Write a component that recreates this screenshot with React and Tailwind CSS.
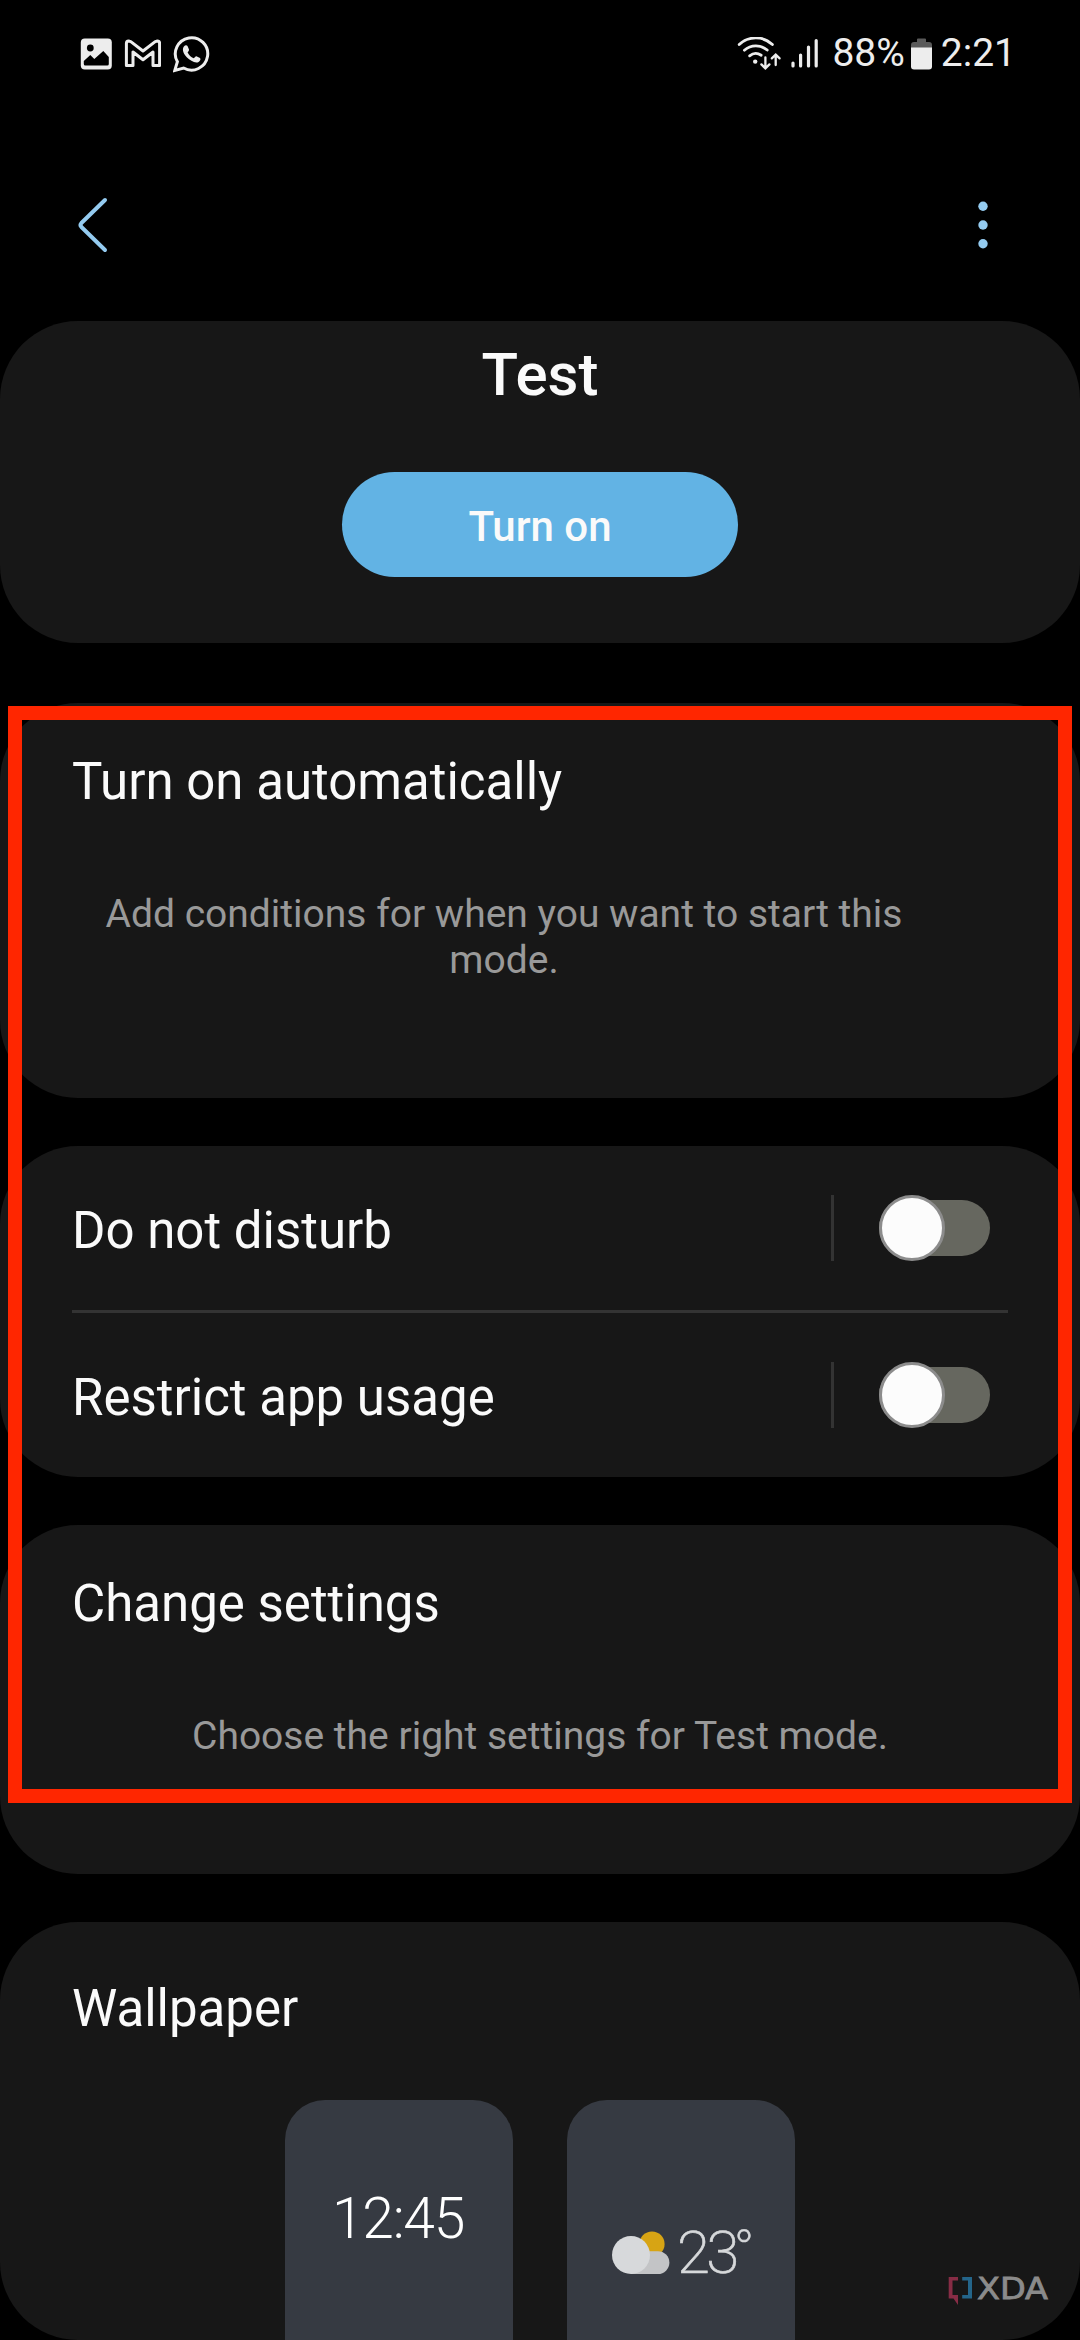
const cardClass = 'bg-[#171717] rounded-[78px]';

const toggles = [
  { id: 'dnd', label: 'Do not disturb' },
  { id: 'restrict', label: 'Restrict app usage' }
];

function ImageIcon() {
  return (
    <svg width="32" height="32" viewBox="0 0 32 32">
      <rect x="0.8" y="0.5" width="31" height="31" rx="4" fill="#ededed" />
      <circle cx="10.3" cy="10" r="3.4" fill="#000" />
      <path d="M3.8 23 L10.3 17 L14.3 21 L23.3 13 L28.8 19 V26 Q28.8 27.5 27.3 27.5 H5.3 Q3.8 27.5 3.8 26 Z" fill="#000" />
    </svg>
  );
}

function GmailIcon() {
  return (
    <svg width="37" height="30" viewBox="0 0 37 30" fill="none" stroke="#ededed" strokeWidth="3" strokeLinejoin="round">
      <path d="M2.4 4.5 Q2.4 2 4.6 2 L6.8 2.6 L19 12 L31.2 2.6 L33.4 2 Q35.6 2 35.6 4.5 V26.6 H29 V13 L19 20.8 L9 13 V26.6 H2.4 Z" />
    </svg>
  );
}

function WhatsAppIcon() {
  return (
    <svg width="38" height="38" viewBox="0 0 38 38">
      <path
        d="M1.8 35.4 L4.4 26.8 A16.2 16.2 0 1 1 10.6 33 Z"
        fill="none"
        stroke="#ededed"
        strokeWidth="3"
        strokeLinejoin="miter"
      />
      <path
        d="M10.9 11.5 C12.2 9.8 13.8 10 14.5 11 L16 14.4 C16.4 15.6 14.8 16.6 14.6 17.5 C15.9 20.2 18 22 20.6 23.2 C21.6 22.9 22.4 21 23.4 21.2 L27 23 C28.1 24 27.2 26 25.6 26.9 C22.4 28.6 17.1 25.8 14 22.6 C11.2 19.5 8.4 15 10.9 11.5 Z"
        fill="#ededed"
      />
    </svg>
  );
}

function WifiIcon() {
  return (
    <svg width="46" height="34" viewBox="0 0 46 34" fill="none" stroke="#ededed" strokeLinecap="round">
      <path d="M2.2 7.6 A24 24 0 0 1 35.4 7.6" strokeWidth="2.8" />
      <path d="M7.4 13.2 A17.5 17.5 0 0 1 30.2 13" strokeWidth="2.8" />
      <path d="M12.6 18.8 A10 10 0 0 1 24.2 18.2" strokeWidth="2.8" />
      <circle cx="18.2" cy="24.6" r="2.2" fill="#ededed" stroke="none" />
      <path d="M28.4 20.5 V31.2 M24.4 27.4 L28.4 31.4 L32.4 27.4" strokeWidth="2.3" />
      <path d="M38.7 28 V18 M34.8 21.4 L38.7 17.6 L42.6 21.4" strokeWidth="2.3" />
    </svg>
  );
}

function SignalIcon() {
  return (
    <svg width="28" height="30" viewBox="0 0 28 30" stroke="#ededed" strokeWidth="3.2" strokeLinecap="round">
      <path d="M2 24 V27 M9.6 16 V27 M17.5 8 V27 M25.2 1.6 V27" />
    </svg>
  );
}

function BatteryIcon() {
  return (
    <svg width="22" height="32" viewBox="0 0 22 32">
      <path d="M6 1.5 Q6 0.5 7 0.5 H14 Q15 0.5 15 1.5 V4 H18 Q21 4 21 7 V10 H0 V7 Q0 4 3 4 H6 Z" fill="#5a5a5a" />
      <path d="M0 9.5 H21 V28.5 Q21 31.5 18 31.5 H3 Q0 31.5 0 28.5 Z" fill="#ededed" />
    </svg>
  );
}

function StatusBar() {
  return (
    <div className="flex h-[107px] shrink-0 items-center justify-between pr-16 pl-20 text-[#ededed]">
      <div className="flex items-center gap-3">
        <ImageIcon />
        <GmailIcon />
        <WhatsAppIcon />
      </div>
      <div className="flex items-center text-[39px] leading-none">
        <WifiIcon />
        <div className="ml-2"><SignalIcon /></div>
        <span className="ml-[13px]">88%</span>
        <div className="ml-[6px]"><BatteryIcon /></div>
        <span className="ml-2">2:21</span>
      </div>
    </div>
  );
}

function Toolbar() {
  return (
    <div className="flex h-[214px] shrink-0 items-start justify-between px-[72px] pt-[86px]">
      <button type="button" aria-label="Back">
        <svg width="40" height="64" viewBox="0 0 40 64" fill="none" stroke="#94cbf0" strokeWidth="4" strokeLinecap="round" strokeLinejoin="round">
          <path d="M33 7 L9.4 30 Q7.6 32 9.4 34 L33 57" />
        </svg>
      </button>
      <button type="button" aria-label="More options">
        <svg width="50" height="64" viewBox="0 0 50 64" fill="#94cbf0">
          <circle cx="25" cy="13.2" r="4.7" />
          <circle cx="25" cy="32" r="4.7" />
          <circle cx="25" cy="50.8" r="4.7" />
        </svg>
      </button>
    </div>
  );
}

function ToggleRow({ label }) {
  return (
    <div className="flex h-[164px] items-center justify-between pr-[18px]">
      <span className="pt-[5px] text-[51px] leading-[60px]">{label}</span>
      <div className="flex items-center">
        <div className="h-[66px] w-[3px] bg-[#333]" />
        <button
          type="button"
          role="switch"
          aria-checked="false"
          aria-label={label}
          className="ml-[45px] flex h-14 w-[111px] items-center rounded-full bg-[#66675f]"
        >
          <span className="size-[66px] shrink-0 rounded-full border-3 border-[#8c8c8c] bg-[#fcfcfc]" />
        </button>
      </div>
    </div>
  );
}

function WeatherIcon() {
  return (
    <svg width="58" height="44" viewBox="0 0 58 44">
      <circle cx="40" cy="13" r="12.6" fill="#d7a414" />
      <path d="M19 20.2 H46 A11.3 11.3 0 0 1 46 43 H19 Z" fill="#c3c4c6" />
      <circle cx="19" cy="24" r="19" fill="#d7d9db" />
    </svg>
  );
}

function XdaLogo() {
  return (
    <svg width="104" height="34" viewBox="0 0 104 34">
      <path d="M10 4 H0.7 V25.5 H5.5 L10 32 V22 H4.5 V7.5 H10 Z" fill="#872c45" />
      <path d="M14.2 4 H24 V25.5 H14.2 V22 H20 V7.5 H14.2 Z" fill="#24658a" />
      <text
        x="29"
        y="25.7"
        textLength="71"
        lengthAdjust="spacingAndGlyphs"
        fill="#8b8b8b"
        stroke="#8b8b8b"
        strokeWidth="0.8"
        className="font-[DejaVu_Sans,sans-serif] text-[29.5px] font-normal"
      >
        XDA
      </text>
    </svg>
  );
}

export default function App() {
  return (
    <div className="relative flex h-[2340px] w-[1080px] flex-col overflow-hidden bg-black font-[Roboto,sans-serif] text-[#fafafa]">
      <StatusBar />
      <Toolbar />

      {/* Mode header */}
      <section className={`${cardClass} flex h-[322px] shrink-0 flex-col items-center pt-[19px]`}>
        <h1 className="text-[60px] leading-[70px] font-medium">Test</h1>
        <button
          type="button"
          className="mt-[62px] h-[105px] w-[396px] rounded-full bg-[#62b3e4] pt-1 text-[42px] font-medium"
        >
          Turn on
        </button>
      </section>

      {/* Conditions */}
      <section className={`${cardClass} mt-[60px] h-[395px] shrink-0 px-[72px] pt-[49px]`}>
        <h2 className="text-[51px] leading-[60px]">Turn on automatically</h2>
        <p className="mt-[79px] w-[864px] text-center text-[39px] leading-[46px] text-[#999]">
          Add conditions for when you want to start this mode.
        </p>
      </section>

      {/* Toggles */}
      <section className={`${cardClass} mt-12 flex shrink-0 flex-col px-[72px]`}>
        <ToggleRow label={toggles[0].label} />
        <div className="h-[3px] bg-[#333]" />
        <ToggleRow label={toggles[1].label} />
      </section>

      {/* Settings */}
      <section className={`${cardClass} mt-12 h-[349px] shrink-0 px-[72px] pt-[49px]`}>
        <h2 className="text-[51px] leading-[60px]">Change settings</h2>
        <p className="mt-[79px] text-center text-[39px] leading-[46px] text-[#999]">
          Choose the right settings for Test mode.
        </p>
      </section>

      {/* Wallpaper previews */}
      <section className={`${cardClass} mt-12 h-[418px] shrink-0 overflow-hidden px-[72px] pt-[57px]`}>
        <h2 className="text-[51px] leading-[60px]">Wallpaper</h2>
        <div className="mt-[61px] flex justify-center gap-[54px]">
          <div className="h-[300px] w-[228px] rounded-[40px] bg-[#363a42] pt-[85px] pr-0.5 text-center text-[57px] leading-[68px] font-light tracking-[-1.3px] text-white">
            12:45
          </div>
          <div className="flex h-[300px] w-[228px] items-start rounded-[40px] bg-[#363a42] pt-[131px] pl-[45px]">
            <WeatherIcon />
            <span className="ml-[7px] text-[60px] leading-[44px] font-extralight tracking-[-3.7px] text-[#d7d9db] [-webkit-text-stroke:0.6px_#d7d9db]">
              23<span className="-ml-0.5 align-[5px] text-[54px] leading-[0]">°</span>
            </span>
          </div>
        </div>
      </section>

      {/* Highlight frame and watermark over the page */}
      <div className="absolute top-[706px] left-2 h-[1097px] w-[1064px] border-14 border-[#ff2600]" />
      <div className="absolute top-[2273px] left-[948px]">
        <XdaLogo />
      </div>
    </div>
  );
}
